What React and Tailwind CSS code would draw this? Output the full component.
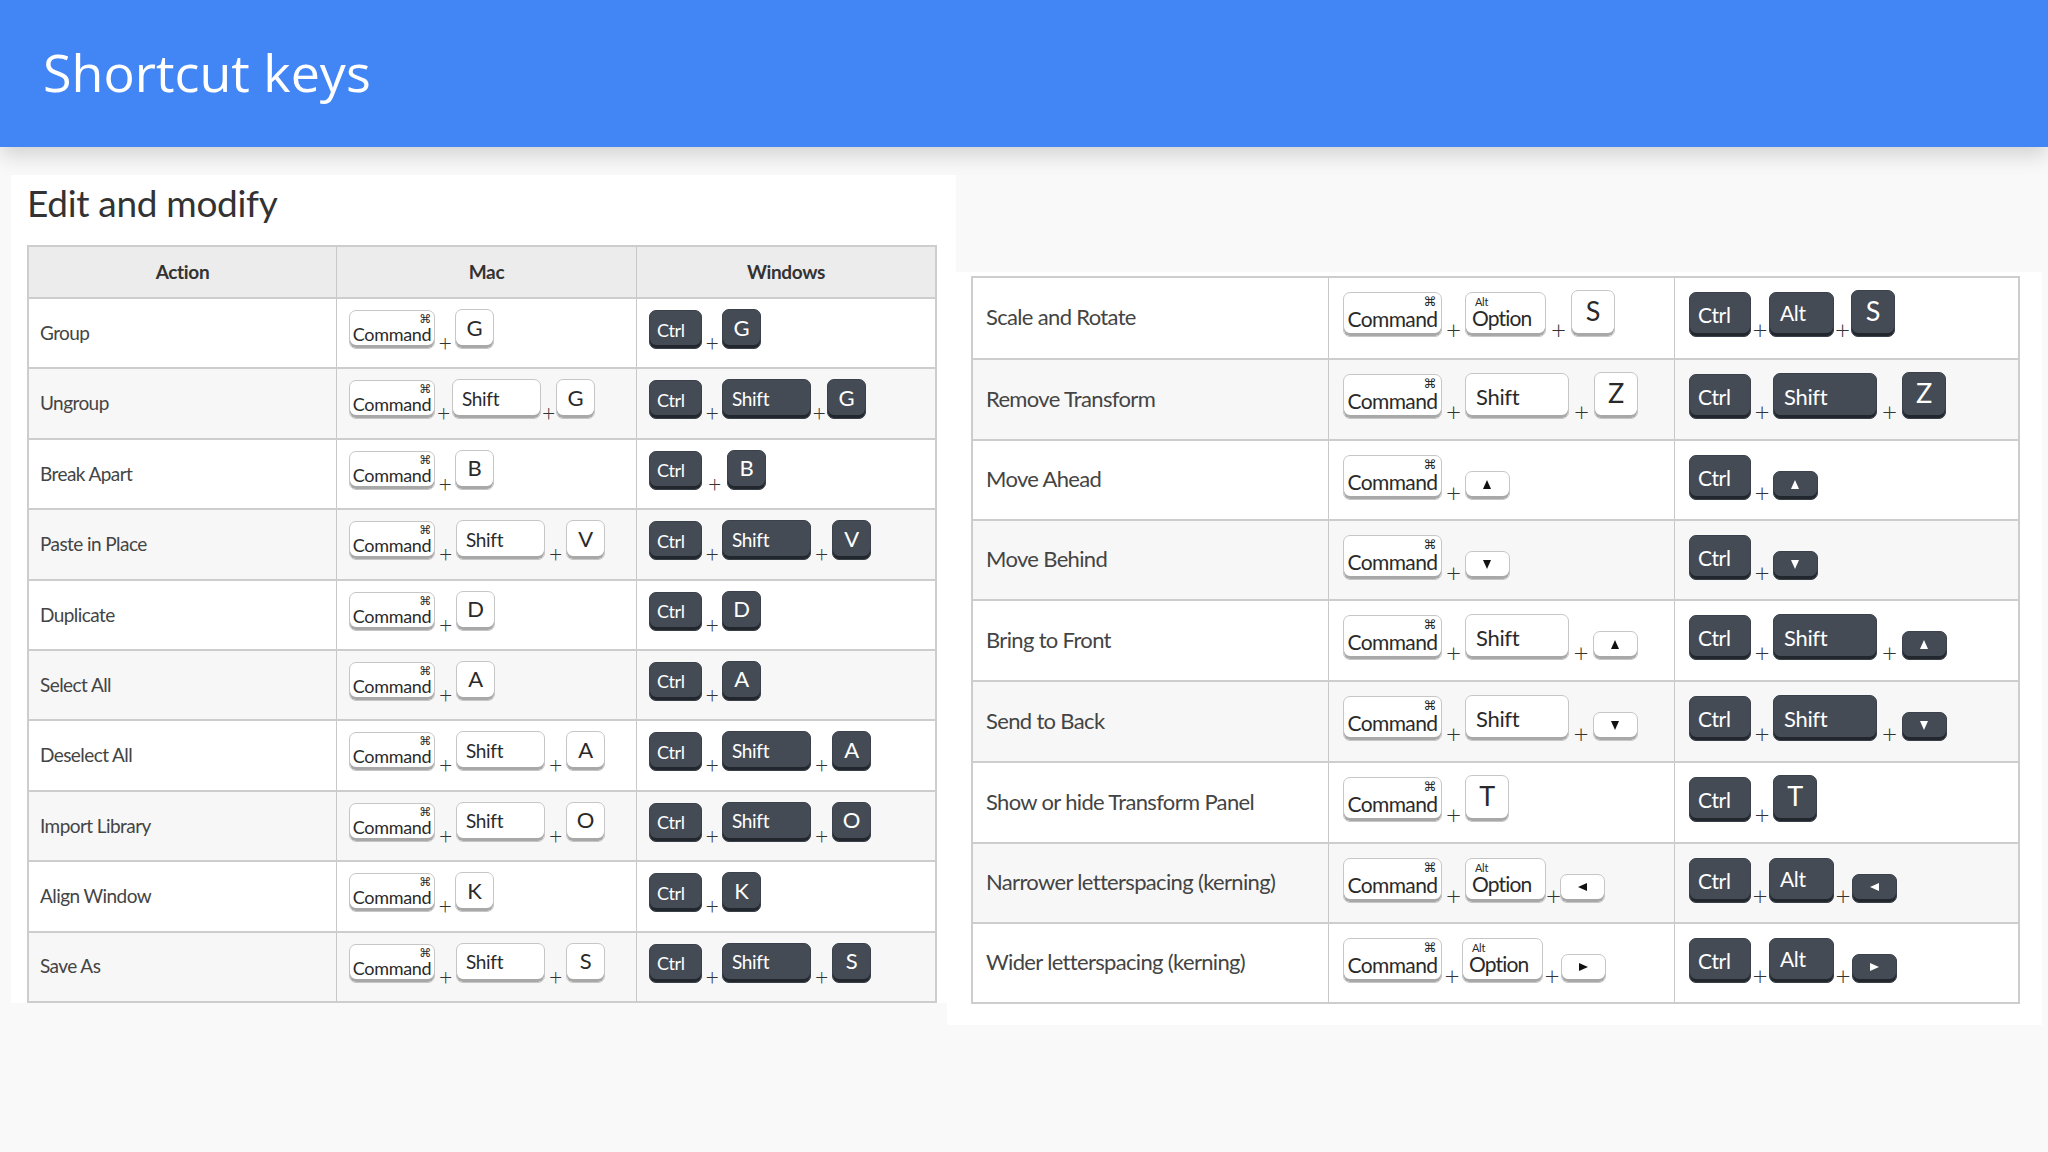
const leftRows = [
  { label: 'Group', mac: ['cmd', 'w-[20px]', 'G'], win: ['ctrl', 'w-[20px]', 'G'] },
  { label: 'Ungroup', mac: ['cmd', 'w-[17px]', 'shift', 'w-[15px]', 'G'], win: ['ctrl', 'w-[20px]', 'shift', 'w-[16px]', 'G'] },
  { label: 'Break Apart', mac: ['cmd', 'w-[20px]', 'B'], win: ['ctrl', 'w-[25px]', 'B'] },
  { label: 'Paste in Place', mac: ['cmd', 'w-[21px]', 'shift', 'w-[21px]', 'V'], win: ['ctrl', 'w-[20px]', 'shift', 'w-[21px]', 'V'] },
  { label: 'Duplicate', mac: ['cmd', 'w-[21px]', 'D'], win: ['ctrl', 'w-[20px]', 'D'] },
  { label: 'Select All', mac: ['cmd', 'w-[21px]', 'A'], win: ['ctrl', 'w-[20px]', 'A'] },
  { label: 'Deselect All', mac: ['cmd', 'w-[21px]', 'shift', 'w-[21px]', 'A'], win: ['ctrl', 'w-[20px]', 'shift', 'w-[21px]', 'A'] },
  { label: 'Import Library', mac: ['cmd', 'w-[21px]', 'shift', 'w-[21px]', 'O'], win: ['ctrl', 'w-[20px]', 'shift', 'w-[21px]', 'O'] },
  { label: 'Align Window', mac: ['cmd', 'w-[20px]', 'K'], win: ['ctrl', 'w-[20px]', 'K'] },
  { label: 'Save As', mac: ['cmd', 'w-[21px]', 'shift', 'w-[21px]', 'S'], win: ['ctrl', 'w-[20px]', 'shift', 'w-[21px]', 'S'] },
]

const rightRows = [
  { label: 'Scale and Rotate', h: 'h-[80px]', mac: ['cmd', 'w-[23px]', 'opt', 'w-[25px]', 'S'], win: ['ctrl', 'w-[18px]', 'alt', 'w-[17px]', 'S'] },
  { label: 'Remove Transform', h: 'h-[81px]', mac: ['cmd', 'w-[23px]', 'shift', 'w-[25px]', 'Z'], win: ['ctrl', 'w-[22px]', 'shift', 'w-[25px]', 'Z'] },
  { label: 'Move Ahead', h: 'h-[80px]', mac: ['cmd', 'w-[23px]', 'up'], win: ['ctrl', 'w-[22px]', 'up'] },
  { label: 'Move Behind', h: 'h-[80px]', mac: ['cmd', 'w-[23px]', 'down'], win: ['ctrl', 'w-[22px]', 'down'] },
  { label: 'Bring to Front', h: 'h-[81px]', mac: ['cmd', 'w-[23px]', 'shift', 'w-[24px]', 'up'], win: ['ctrl', 'w-[22px]', 'shift', 'w-[25px]', 'up'] },
  { label: 'Send to Back', h: 'h-[81px]', mac: ['cmd', 'w-[23px]', 'shift', 'w-[24px]', 'down'], win: ['ctrl', 'w-[22px]', 'shift', 'w-[25px]', 'down'] },
  { label: 'Show or hide Transform Panel', h: 'h-[81px]', mac: ['cmd', 'w-[23px]', 'T'], win: ['ctrl', 'w-[22px]', 'T'] },
  { label: 'Narrower letterspacing (kerning)', h: 'h-[80px]', mac: ['cmd', 'w-[23px]', 'opt', 'w-[14px]', 'left'], win: ['ctrl', 'w-[18px]', 'alt', 'w-[18px]', 'left'] },
  { label: 'Wider letterspacing (kerning)', h: 'h-[80px]', mac: ['cmd', 'w-[20px]', 'opt', 'w-[18px]', 'right'], win: ['ctrl', 'w-[18px]', 'alt', 'w-[18px]', 'right'] },
]

const Plus = ({ w, big }) => (
  <div className={`${w} ${big ? 'text-[26px] leading-[16px]' : 'text-[23px] leading-[14px]'} shrink-0 text-center font-light text-[#333]`}>+</div>
)

const Arrow = ({ dir, dark }) => {
  const points = { up: '4,0 8,9 0,9', down: '0,0 8,0 4,9', left: '9,0 9,8 0,4', right: '0,0 9,4 0,8' }
  return (
    <svg width="9" height="9" viewBox="0 0 9 9" className="mb-[3px]">
      <polygon points={points[dir]} fill={dark ? '#ffffff' : '#111111'} />
    </svg>
  )
}

const Key = ({ name, big, dark }) => {
  const face = dark
    ? 'border-[#3b414a] bg-[#444b55] text-white shadow-[inset_0_-3px_0_#22272e]'
    : 'border-[#c6c6c6] bg-white text-[#2a2a2a] shadow-[inset_0_-3px_0_#a8a8a8]'
  const base = `relative flex shrink-0 rounded-[7px] border ${face}`

  if (name === 'cmd') {
    return (
      <div className={`${base} ${big ? 'h-[45px] w-[99px]' : 'h-[39px] w-[86px]'} items-end justify-center`}>
        <span className={`absolute font-['DejaVu_Sans',sans-serif] leading-[12px] ${big ? 'right-[5px] top-[3px] text-[13px]' : 'right-[3px] top-[2px] text-[12px]'}`}>⌘</span>
        <span className={big ? 'pb-[7px] text-[21px] leading-[20px] tracking-[-0.03em]' : 'pb-[5px] text-[18px] leading-[18px]'}>Command</span>
      </div>
    )
  }
  if (name === 'opt') {
    return (
      <div className={`${base} h-[45px] w-[81px] items-end pl-[6px]`}>
        <span className="absolute left-[9px] top-[3px] text-[11px] leading-[12px]">Alt</span>
        <span className="pb-[8px] text-[21px] leading-[20px] tracking-[-0.04em]">Option</span>
      </div>
    )
  }
  if (name === 'ctrl') {
    return (
      <div className={`${base} ${big ? 'h-[45px] w-[62px] pl-[8px] text-[21px]' : 'h-[39px] w-[53px] pl-[7px] text-[18px]'} items-center pt-[1px]`}>Ctrl</div>
    )
  }
  if (name === 'alt') {
    return <div className={`${base} h-[45px] w-[65px] items-center pb-[3px] pl-[10px] text-[21px]`}>Alt</div>
  }
  if (name === 'shift') {
    return (
      <div className={`${base} ${big ? 'h-[46px] w-[104px] pl-[10px] text-[22px]' : 'h-[40px] w-[89px] pl-[9px] text-[19px]'} items-center`}>Shift</div>
    )
  }
  if (['up', 'down', 'left', 'right'].includes(name)) {
    return (
      <div className={`${base} h-[29px] w-[45px] items-center justify-center`}>
        <Arrow dir={name} dark={dark} />
      </div>
    )
  }
  return (
    <div className={`${base} ${big ? 'h-[47px] w-[44px] pb-[4px] text-[27px]' : 'h-[40px] w-[39px] pb-[4px] text-[22px]'} items-center justify-center`}>{name}</div>
  )
}

const Combo = ({ items, big, dark }) => (
  <div className={`flex items-end ${big ? 'h-[47px]' : 'h-[40px]'}`}>
    {items.map((item, i) =>
      item.startsWith('w-') ? <Plus key={i} w={item} big={big} /> : <Key key={i} name={item} big={big} dark={dark} />
    )}
  </div>
)

export default function App() {
  return (
    <div className="h-[1152px] w-[2048px] overflow-hidden bg-[#f9f9f9] font-['Lato',sans-serif] tracking-[-0.02em] text-[#333]">
      <header className="relative z-10 flex h-[147px] items-center bg-[#4285f4] pl-[43px] shadow-[0_8px_20px_rgba(0,0,0,0.16)]">
        <h1 className="pb-[4px] font-['Open_Sans',sans-serif] text-[52px] font-normal tracking-normal text-white">Shortcut keys</h1>
      </header>

      <div className="flex items-start pl-[11px]">
        {/* left panel */}
        <section className="relative z-[1] mt-[28px] h-[828px] w-[945px] bg-white pl-[16px]">
          <h2 className="mb-[15px] flex h-[55px] items-center text-[37px] text-[#333]">Edit and modify</h2>
          <div className="w-[910px] border-2 border-[#cdcdcd]">
            <div className="grid h-[50px] grid-cols-[307px_300px_1fr] items-stretch bg-[#ececec] text-[19px] font-bold">
              <div className="flex items-center justify-center">Action</div>
              <div className="flex items-center justify-center border-l border-[#c8c8c8]">Mac</div>
              <div className="flex items-center justify-center border-l border-[#c8c8c8]">Windows</div>
            </div>
            {leftRows.map((row, i) => (
              <div key={row.label} className={`grid h-[70.4px] grid-cols-[307px_300px_1fr] border-t-2 border-[#cdcdcd] ${i % 2 ? 'bg-[#f7f7f7]' : 'bg-white'}`}>
                <div className="flex items-center pl-[11px] text-[19px] tracking-[-0.03em] text-[#444]">{row.label}</div>
                <div className="border-l border-[#c8c8c8] pl-[12px] pt-[10px]">
                  <Combo items={row.mac} />
                </div>
                <div className="border-l border-[#c8c8c8] pl-[12px] pt-[10px]">
                  <Combo items={row.win} dark />
                </div>
              </div>
            ))}
          </div>
        </section>

        {/* right panel */}
        <section className="ml-[-9px] mt-[125px] h-[753px] w-[1095px] bg-white pl-[24px] pt-[4px]">
          <div className="w-[1049px] border-2 border-[#cdcdcd]">
            {rightRows.map((row, i) => (
              <div key={row.label} className={`grid ${row.h} grid-cols-[355px_346px_1fr] ${i > 0 ? 'border-t-2 border-[#cdcdcd]' : ''} ${i % 2 ? 'bg-[#f7f7f7]' : 'bg-white'}`}>
                <div className="flex items-center pb-[3px] pl-[13px] text-[22px] tracking-[-0.03em] text-[#444]">{row.label}</div>
                <div className="border-l border-[#c8c8c8] pl-[14px] pt-[12px]">
                  <Combo items={row.mac} big />
                </div>
                <div className="border-l border-[#c8c8c8] pl-[14px] pt-[12px]">
                  <Combo items={row.win} big dark />
                </div>
              </div>
            ))}
          </div>
        </section>
      </div>
    </div>
  )
}
